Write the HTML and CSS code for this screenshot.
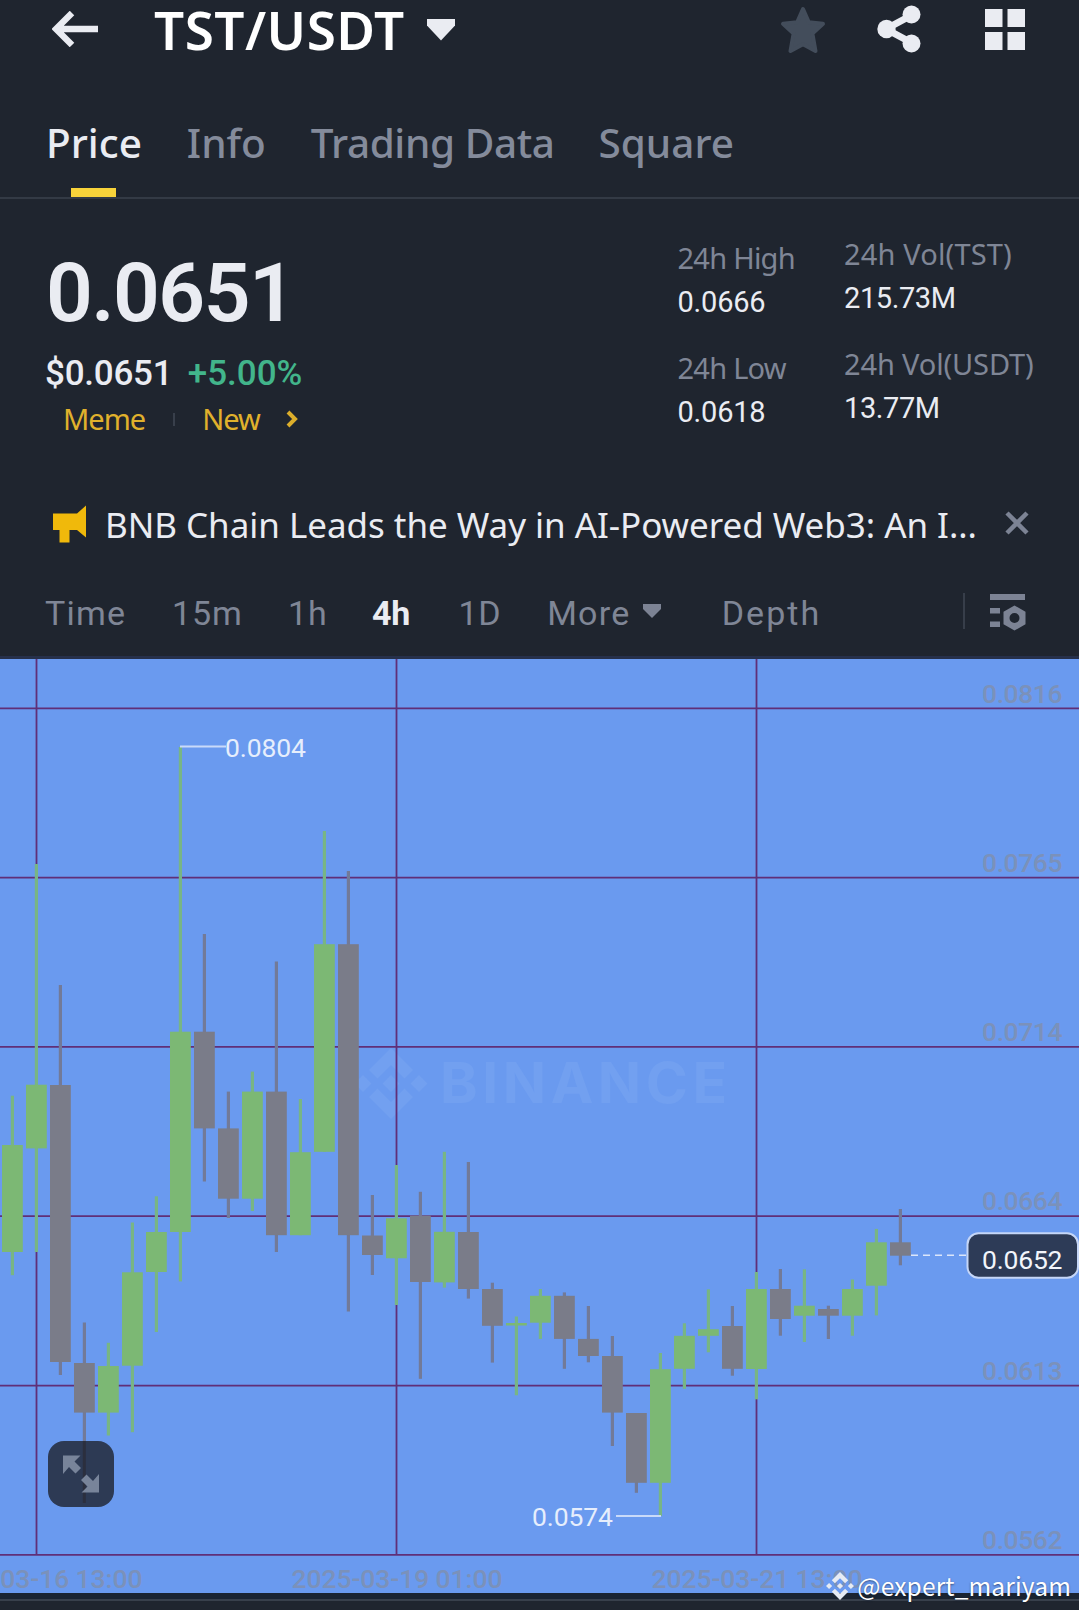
FILE: index.html
```html
<!DOCTYPE html>
<html lang="en">
<head>
<meta charset="utf-8">
<title>TST/USDT</title>
<link rel="stylesheet" href="styles.css">
</head>
<body>
<header class="topbar">
  <svg class="back" width="46" height="36" viewBox="0 0 46 36"><path d="M46 18H5M20 2 4 18l16 16" fill="none" stroke="#eaecf2" stroke-width="6.4"/></svg>
  <h1 class="pair">TST/USDT</h1>
  <svg class="pair-caret" width="28" height="22" viewBox="0 0 28 22"><path d="M0 0h28v6.500L14 21.500 0 6.500z" fill="#eaecf2"/></svg>
  <svg class="star" width="46" height="48" viewBox="0 0 46 48"><path d="M23 3l5.800 13.200 14.200 1.600-10.600 9.700L35.500 45 23 38.300 10.500 45l3.100-17.500L3 17.800l14.200-1.600z" fill="#434d5b" stroke="#434d5b" stroke-width="4" stroke-linejoin="round"/></svg>
  <svg class="share" width="44" height="48" viewBox="0 0 44 48"><path d="M35 10 9 24l26 14" fill="none" stroke="#eaecf2" stroke-width="7"/><g fill="#eaecf2"><circle cx="34.500" cy="9.500" r="9"/><circle cx="9.500" cy="24" r="9.200"/><circle cx="34.500" cy="38.500" r="9"/></g></svg>
  <svg class="apps" width="40" height="41" viewBox="0 0 40 41"><path d="M0 0h17.500v18H0zM22.500 0H40v18H22.500zM0 23h17.500v18H0zM22.500 23H40v18H22.500z" fill="#eaecf2"/></svg>
</header>

<nav class="tabs">
  <a class="tab tab-active">Price</a>
  <a class="tab">Info</a>
  <a class="tab tab-trading">Trading Data</a>
  <a class="tab">Square</a>
</nav>

<section class="quote">
  <div class="quote-main">
    <div class="last">0.0651</div>
    <div class="change-row"><span>$0.0651</span><span class="change">+5.00%</span></div>
    <div class="tags">
      <a>Meme</a><i class="tag-sep"></i><a>New</a>
      <svg class="tag-more" width="12" height="18" viewBox="0 0 12 18"><path d="M2 2l7 7-7 7" fill="none" stroke="#dcae2b" stroke-width="4"/></svg>
    </div>
  </div>
  <dl class="stats stats-range">
    <dt>24h High</dt><dd>0.0666</dd>
    <dt>24h Low</dt><dd>0.0618</dd>
  </dl>
  <dl class="stats stats-volume">
    <dt>24h Vol(TST)</dt><dd>215.73M</dd>
    <dt>24h Vol(USDT)</dt><dd>13.77M</dd>
  </dl>
</section>

<section class="notice">
  <svg class="horn" width="33" height="38" viewBox="0 0 33 38"><path d="M0 8.500h24L33 .5v32l-9-7.500h-7.500v12.500h-10V25H0z" fill="#f0b90b"/></svg>
  <span class="notice-text">BNB Chain Leads the Way in AI-Powered Web3: An I...</span>
  <svg class="close" width="24" height="24" viewBox="0 0 24 24"><path d="M2 2l20 20M22 2 2 22" fill="none" stroke="#7c8394" stroke-width="4.500"/></svg>
</section>

<nav class="intervals">
  <a class="time">Time</a>
  <a class="m15">15m</a>
  <a class="h1">1h</a>
  <a class="h4">4h</a>
  <a class="d1">1D</a>
  <a class="more">More</a>
  <svg class="more-caret" width="18" height="14" viewBox="0 0 18 14"><path d="M0 0h18v5L9 14 0 5z" fill="#7c8394"/></svg>
  <a class="depth">Depth</a>
  <i class="rule"></i>
  <svg class="settings" width="36" height="38" viewBox="0 0 36 38"><path d="M0 1h35v6H0zM0 15h10v5.500H0zM0 28.500h10V34H0z" fill="#7c8394"/><path fill-rule="evenodd" d="M24.500 12.500l11 6.200v12.600l-11 6.200-11-6.200V18.700zM24.500 20a5 5 0 100 10 5 5 0 000-10z" fill="#7c8394"/></svg>
</nav>

<main class="chart">
  <svg width="1079" height="934" viewBox="0 659 1079 934">
    <g class="brand">
      <path d="M391 1048l22 22-8.500 8.500L391 1065l-13.500 13.500L369 1070zM391 1119l22-22-8.500-8.500L391 1102l-13.500-13.500L369 1097zM391 1075l8.500 8.500-8.500 8.500-8.500-8.500zM363 1075l8.500 8.500-8.500 8.500-8.500-8.500zM419 1075l8.500 8.500-8.500 8.500-8.500-8.500z"/>
      <text x="440" y="1103" textLength="287">BINANCE</text>
    </g>
    <g class="grid" id="grid"></g>
    <g class="axis" id="axis"></g>
    <g id="candles"></g>
    <path class="marker" d="M180 746.500h46M616 1516h45"/>
    <text class="marker-label" x="225" y="756.500" textLength="81">0.0804</text>
    <text class="marker-label" x="532" y="1526" textLength="81">0.0574</text>
    <path class="last-line" d="M911 1255.300h56"/>
    <rect class="last-tag" x="967.500" y="1233.300" width="110.500" height="44.500" rx="11"/>
    <text class="last-label" x="982" y="1268.700" textLength="80.500">0.0652</text>
    <rect x="48" y="1441" width="66" height="66" rx="16" fill="#2d3a54"/>
    <path d="M84.300 1441v62" stroke="#2b2f3e" stroke-width="3"/>
    <path d="M63 1455.500h17.500l-6 6 6.500 6.500-5.500 5.500-6.500-6.500-6 7zM99 1492.500H81.500l6-6-6.500-6.500 5.500-5.500 6.500 6.500 6-7z" fill="#78849a"/>
  </svg>
</main>
<footer class="bottom"></footer>
<div class="credit">
  <svg width="28" height="28" viewBox="0 0 29 29"><path d="M14.500 0l8.500 8.500-3.200 3.200-5.300-5.300-5.300 5.300L6 8.500zM14.500 29l8.500-8.500-3.200-3.200-5.300 5.300-5.300-5.300L6 20.500zM14.500 11.300l3.200 3.200-3.200 3.200-3.200-3.200zM3.200 11.300l3.200 3.200-3.200 3.200L0 14.500zM25.800 11.300l3.200 3.200-3.200 3.200-3.200-3.200z" fill="#e6ebf3"/></svg>
  <span>@expert_mariyam</span>
</div>
<script src="chart.js"></script>
</body>
</html>
```
FILE: styles.css
```css
* { box-sizing: border-box; margin: 0; padding: 0; }
body {
  position: relative;
  width: 1079px;
  height: 1610px;
  overflow: hidden;
  background: #1f252f;
  color: #eaecf2;
  font-family: "Noto Sans", sans-serif;
  white-space: nowrap;
}
svg { display: block; flex: none; }

/* Top bar */
.topbar { display: flex; align-items: center; height: 59px; padding-left: 52px; }
.back { margin-top: -1px; }
.pair { width: 252px; margin-left: 56px; font-size: 53px; font-weight: 600; line-height: 59px; letter-spacing: 0.49px; color: #fff; }
.pair-caret { margin-left: 21px; }
.star { margin: 1px 0 0 325px; }
.share { margin: -1px 0 0 51px; }
.apps { margin: -1px 0 0 64px; }

/* Tabs */
.tabs { display: flex; gap: 44.9px; height: 140px; padding: 53.500px 0 0 46px; border-bottom: 2px solid #333a45; }
.tab { display: flex; flex-direction: column; font-size: 40.500px; font-weight: 500; line-height: 60px; color: #848b9b; }
.tab-trading { letter-spacing: -0.4px; margin-right: -1px; }
.tab-active { color: #eaecf2; }
.tab-active::after { content: ""; width: 45px; height: 9px; margin: auto 0 0 25px; background: #f8d33a; }

/* Quote */
.quote { display: flex; height: 295px; }
.quote-main { width: 677.500px; padding-top: 49px; font-family: Roboto, sans-serif; }
.last { margin-left: 46px; font-size: 82px; font-weight: 600; line-height: 90px; letter-spacing: -1.54px; }
.change-row { display: flex; margin: 14px 0 0 45px; font-size: 35px; font-weight: 500; line-height: 44px; letter-spacing: -0.25px; }
.change { margin-left: 15.400px; letter-spacing: 0; color: #42b58b; }
.tags { display: flex; align-items: center; margin: 5px 0 0 63px; font: 29px/36px "Noto Sans", sans-serif; letter-spacing: -1px; color: #e0b12c; }
.tag-sep { width: 2px; height: 13px; margin: 0 27.500px; background: #383f4b; }
.tag-more { margin-left: 26px; }
.stats { width: 166.500px; padding-top: 36.500px; font-size: 29px; line-height: 44px; }
.stats dt { letter-spacing: -0.75px; color: #7f8696; }
.stats dd { font-family: Roboto, sans-serif; letter-spacing: -0.2px; }
.stats dd + dt { margin-top: 22px; }
.stats-volume { padding-top: 32.500px; }
.stats-volume dt { letter-spacing: 0.15px; }
.stats-volume dt:last-of-type { letter-spacing: -0.14px; }
.stats-volume dd { letter-spacing: -0.4px; }

/* Notice */
.notice { display: flex; align-items: center; height: 61px; padding-left: 52.500px; font-size: 35px; }
.horn { margin-top: -2px; }
.notice-text { width: 872px; margin-left: 19.500px; letter-spacing: -0.04px; }
.close { margin: -3px 0 0 28px; }

/* Interval picker */
.intervals { display: flex; align-items: center; height: 104px; padding-top: 15px; border-bottom: 3px solid #26304a; font: 34px/40px Roboto, sans-serif; letter-spacing: 0.89px; color: #7f8696; }
.time { margin-left: 45px; letter-spacing: 1.2px; }
.m15 { margin-left: 45.800px; }
.h1 { margin-left: 45.200px; }
.h4 { margin-left: 44.400px; letter-spacing: -0.3px; font-weight: 700; color: #eaecf2; }
.d1 { margin-left: 48.500px; }
.more { margin-left: 45.600px; letter-spacing: 1.24px; }
.more-caret { margin: -4px 0 0 12.700px; }
.depth { margin-left: 60.500px; letter-spacing: 2.1px; }
.rule { width: 2px; height: 36px; margin: -4px 0 0 141.500px; background: #373e4a; }
.settings { margin: -3px 0 0 25.500px; }

/* Chart */
.chart { height: 934px; background: #6a9aef; }
.chart text { font-family: Roboto, sans-serif; font-size: 26.500px; }
.grid path { fill: none; stroke: #602f78; stroke-width: 1.8; }
.brand { fill: #72a0f0; }
.chart .brand text { font-family: Inter, sans-serif; font-size: 57px; font-weight: 700; }
.axis { fill: #7b91ba; }
.chart .axis text { font-weight: 500; }
.up { fill: #7cb874; stroke: none; }
.down { fill: #7a7c89; }
.up .wick { fill: #78b585; }
.down .wick { fill: #727a98; }
.marker { fill: none; stroke: #c9daf9; stroke-width: 2; }
.marker-label { fill: #e6eefc; }
.last-line { fill: none; stroke: #dbe6fb; stroke-width: 1.600; stroke-dasharray: 7 5; }
.last-tag { fill: #2d3b57; stroke: #c5d6f7; stroke-width: 2; }
.last-label { fill: #f2f5fb; }

.bottom { height: 17px; border-top: 6px solid #1a2432; }
.bottom::before { content: ""; display: block; height: 2px; background: #38404c; }

/* Author credit laid over the chart's corner */
.credit { position: absolute; right: 8px; bottom: 1px; display: flex; align-items: center; gap: 3px; height: 47px; font: 24.500px/40px "Noto Sans CJK SC", sans-serif; letter-spacing: 0.15px; color: #fff; text-shadow: 0 1px 2px rgba(20, 30, 50, 0.6); }
```
FILE: chart.js
```js
const NS = 'http://www.w3.org/2000/svg';

function add(parent, name, attrs, text) {
  const el = document.createElementNS(NS, name);
  for (const key in attrs) el.setAttribute(key, attrs[key]);
  if (text) el.textContent = text;
  parent.appendChild(el);
  return el;
}

const rows = [708.3, 877.7, 1046.8, 1216.2, 1385.6, 1554.8];
const columns = [36.5, 396.5, 756.5];
const grid = document.getElementById('grid');
const axis = document.getElementById('axis');
rows.forEach(y => add(grid, 'path', { d: `M0 ${y}H1079` }));
columns.forEach(x => add(grid, 'path', { d: `M${x} 658V1555` }));

['0.0816', '0.0765', '0.0714', '0.0664', '0.0613', '0.0562'].forEach((label, i) =>
  add(axis, 'text', { x: 982, y: rows[i] - 5.8, textLength: 80.5 }, label));
['2025-03-16 13:00', '2025-03-19 01:00', '2025-03-21 13:00'].forEach((label, i) =>
  add(axis, 'text', { x: columns[i] - 105, y: 1587.5, textLength: 211 }, label));

// direction, wick top, body top, body bottom, wick bottom
const candles = [
  ['up', 1095.7, 1145, 1252, 1275.2], ['up', 864, 1084.7, 1148.4, 1252],
  ['down', 985, 1085, 1362, 1375], ['down', 1322.5, 1363, 1412.6, 1441],
  ['up', 1342.8, 1366, 1412.6, 1435.5], ['up', 1222.5, 1272.3, 1365.7, 1432.2],
  ['up', 1196.3, 1232, 1272, 1332], ['up', 747, 1031.7, 1232, 1281.4],
  ['down', 934, 1031.7, 1128.4, 1181.5], ['down', 1091.6, 1128.4, 1198.7, 1218],
  ['up', 1071.6, 1091.6, 1198.7, 1211], ['down', 961.5, 1091.6, 1235.2, 1252],
  ['up', 1099, 1152.2, 1235.2, 1235.2], ['up', 831, 944.2, 1151.8, 1151.8],
  ['down', 871, 944.2, 1235.2, 1311.5], ['down', 1195, 1235.5, 1255, 1275],
  ['up', 1165, 1218.3, 1258.3, 1305], ['down', 1191.8, 1215.6, 1282, 1378.8],
  ['up', 1151.8, 1231.8, 1282.4, 1287.6], ['down', 1162, 1232, 1289, 1298.6],
  ['down', 1282.7, 1289, 1325.8, 1362.6], ['up', 1316.5, 1323, 1325.5, 1395.3],
  ['up', 1289, 1295.8, 1322.7, 1338.9], ['down', 1292.4, 1295.8, 1338.9, 1368.8],
  ['down', 1306, 1338.9, 1356, 1362.3], ['down', 1336, 1356, 1412.6, 1446],
  ['down', 1413, 1413, 1482.8, 1492.8], ['up', 1353, 1369.2, 1482.8, 1515.9],
  ['up', 1323.3, 1335.8, 1368.8, 1388.8], ['up', 1289.3, 1329.2, 1335.8, 1352.3],
  ['down', 1306, 1326, 1368.8, 1375.7], ['up', 1272, 1289, 1369, 1399.3],
  ['down', 1269, 1289, 1319, 1335.7], ['up', 1269.3, 1305.7, 1315.7, 1342],
  ['down', 1305.7, 1309, 1315.7, 1339], ['up', 1279.5, 1289, 1315.7, 1335.7],
  ['up', 1228.9, 1242.3, 1285.7, 1315.4], ['down', 1209, 1242.3, 1255.7, 1265.3]
];
const layer = document.getElementById('candles');
candles.forEach(([dir, high, top, bottom, low], i) => {
  const x = 12.4 + 24 * i;
  const g = add(layer, 'g', { class: dir });
  add(g, 'rect', { class: 'wick', x: x - 1.6, y: high, width: 3.2, height: low - high });
  add(g, 'rect', { x: x - 10.4, y: top, width: 20.8, height: bottom - top });
});
```
